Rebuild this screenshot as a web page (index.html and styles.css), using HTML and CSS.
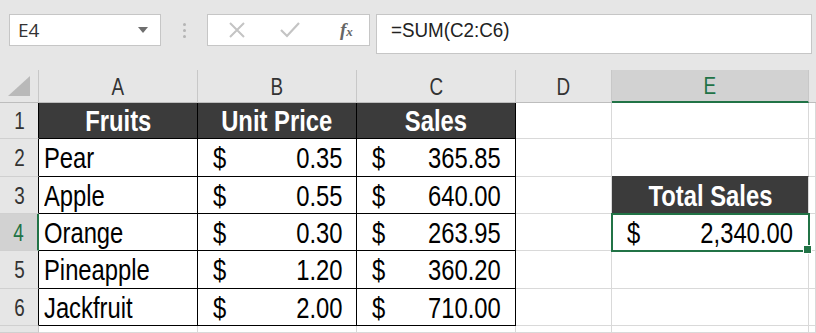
FILE: index.html
```html
<!DOCTYPE html>
<html lang="en">
<head>
    <meta charset="UTF-8">
    <meta name="viewport" content="width=device-width, initial-scale=1.0">
    <title>Sales sheet</title>
    <link rel="stylesheet" href="styles.css">
</head>
<body>
    <div class="formula-bar">
        <div class="name-box">
            <span>E4</span>
            <svg class="caret" width="10" height="6" viewBox="0 0 10 6"><path d="M0 0 L10 0 L5 6 Z" fill="#6e6e6e"/></svg>
        </div>
        <div class="grip"><i></i><i></i><i></i></div>
        <div class="fx-buttons">
            <svg width="18" height="18" viewBox="0 0 18 18"><path d="M2 2 L16 16 M16 2 L2 16" stroke="#c4c4c4" stroke-width="2" fill="none"/></svg>
            <svg width="22" height="18" viewBox="0 0 22 18"><path d="M2 9 L8 15 L20 2" stroke="#c4c4c4" stroke-width="2.2" fill="none"/></svg>
            <span class="fx">f<sub>x</sub></span>
        </div>
        <div class="formula"><span class="nw-soft">=SUM(C2:C6)</span></div>
    </div>

    <div class="sheet">
        <!-- column headers -->
        <div class="corner"><svg width="22" height="20" viewBox="0 0 22 20"><path d="M22 0 L22 20 L0 20 Z" fill="#b9b9b9"/></svg></div>
        <div class="col-head"><span class="nw">A</span></div>
        <div class="col-head"><span class="nw">B</span></div>
        <div class="col-head"><span class="nw">C</span></div>
        <div class="col-head"><span class="nw">D</span></div>
        <div class="col-head active"><span class="nw">E</span></div>
        <div class="col-head blank"></div>

        <!-- row 1 -->
        <div class="row-head edge"><span class="nw">1</span></div>
        <div class="cell t dark"><span class="nw">Fruits</span></div>
        <div class="cell t dark"><span class="nw">Unit Price</span></div>
        <div class="cell t dark"><span class="nw">Sales</span></div>
        <div class="cell"></div>
        <div class="cell"></div>
        <div class="cell"></div>

        <!-- row 2 -->
        <div class="row-head edge"><span class="nw">2</span></div>
        <div class="cell t text"><span class="nw">Pear</span></div>
        <div class="cell t money"><span class="nw">$</span><span class="nw">0.35</span></div>
        <div class="cell t money"><span class="nw">$</span><span class="nw">365.85</span></div>
        <div class="cell"></div>
        <div class="cell above-dark"></div>
        <div class="cell"></div>

        <!-- row 3 -->
        <div class="row-head edge"><span class="nw">3</span></div>
        <div class="cell t text"><span class="nw">Apple</span></div>
        <div class="cell t money"><span class="nw">$</span><span class="nw">0.55</span></div>
        <div class="cell t money"><span class="nw">$</span><span class="nw">640.00</span></div>
        <div class="cell"></div>
        <div class="cell dark total"><span class="nw">Total Sales</span></div>
        <div class="cell"></div>

        <!-- row 4 -->
        <div class="row-head edge selected"><span class="nw">4</span></div>
        <div class="cell t text"><span class="nw">Orange</span></div>
        <div class="cell t money"><span class="nw">$</span><span class="nw">0.30</span></div>
        <div class="cell t money"><span class="nw">$</span><span class="nw">263.95</span></div>
        <div class="cell"></div>
        <div class="cell money current"><span class="nw">$</span><span class="nw">2,340.00</span></div>
        <div class="cell"></div>

        <!-- row 5 -->
        <div class="row-head edge"><span class="nw">5</span></div>
        <div class="cell t text"><span class="nw">Pineapple</span></div>
        <div class="cell t money"><span class="nw">$</span><span class="nw">1.20</span></div>
        <div class="cell t money"><span class="nw">$</span><span class="nw">360.20</span></div>
        <div class="cell"></div>
        <div class="cell"></div>
        <div class="cell"></div>

        <!-- row 6 -->
        <div class="row-head edge"><span class="nw">6</span></div>
        <div class="cell t text"><span class="nw">Jackfruit</span></div>
        <div class="cell t money"><span class="nw">$</span><span class="nw">2.00</span></div>
        <div class="cell t money"><span class="nw">$</span><span class="nw">710.00</span></div>
        <div class="cell"></div>
        <div class="cell"></div>
        <div class="cell"></div>

        <!-- row 7, only its top shows -->
        <div class="row-head"></div>
        <div class="cell"></div>
        <div class="cell"></div>
        <div class="cell"></div>
        <div class="cell"></div>
        <div class="cell"></div>
        <div class="cell"></div>
    </div>
</body>
</html>
```

FILE: styles.css
```css
body {
    margin: 0;
    height: 333px;
    overflow: hidden;
    background-color: #e6e6e6;
    font-family: 'Liberation Sans', Arial, sans-serif;
    color: #000;
}

/* Arial Narrow look: squeeze Liberation Sans */
.nw {
    display: inline-block;
    transform: scaleX(0.82);
}

.nw-soft {
    display: inline-block;
    transform: scaleX(0.94);
    transform-origin: left center;
}

/* formula bar */
.formula-bar {
    display: flex;
    align-items: flex-start;
    height: 70px;
    padding: 14px 4px 0 9px;
    box-sizing: border-box;
}

.name-box {
    width: 152px;
    height: 32px;
    box-sizing: border-box;
    background-color: #fff;
    border: 1px solid #c6c6c6;
    display: flex;
    align-items: center;
    justify-content: space-between;
    padding: 0 12px 0 8px;
    font-family: 'Open Sans', 'Liberation Sans', sans-serif;
    font-size: 19px;
    color: #333;
}

.grip {
    width: 46px;
    height: 32px;
    display: flex;
    flex-direction: column;
    align-items: center;
    justify-content: center;
    gap: 3px;
}

.grip i {
    width: 3px;
    height: 3px;
    background-color: #b5b5b5;
    border-radius: 50%;
}

.fx-buttons {
    width: 163px;
    height: 32px;
    box-sizing: border-box;
    background-color: #fff;
    border: 1px solid #c6c6c6;
    display: flex;
    align-items: center;
    gap: 33px;
    padding-left: 20px;
}

.fx {
    font-family: 'Liberation Serif', serif;
    font-style: italic;
    font-weight: bold;
    font-size: 19px;
    color: #666;
    margin-left: 6px;
}

.fx sub {
    font-size: 13px;
    vertical-align: 0;
}

.formula {
    flex: 1;
    height: 40px;
    margin-left: 6px;
    box-sizing: border-box;
    background-color: #fff;
    border: 1px solid #c6c6c6;
    padding: 4px 0 0 14px;
    font-size: 20px;
    color: #222;
}

/* sheet grid */
.sheet {
    display: grid;
    grid-template-columns: 39px 159px 159px 159px 96px 197px 1fr;
    grid-template-rows: 33px 36px 38px 37px 37px 38px 37px 7px;
    background-color: #fff;
}

.corner,
.col-head,
.row-head {
    background-color: #e6e6e6;
    box-sizing: border-box;
}

.corner {
    display: flex;
    align-items: flex-end;
    justify-content: center;
    padding-bottom: 6px;
    border-right: 1px solid #c8c8c8;
    border-bottom: 1px solid #bdbdbd;
}

.col-head {
    display: flex;
    align-items: center;
    justify-content: center;
    font-size: 23px;
    color: #333;
    border-right: 1px solid #c8c8c8;
    border-bottom: 1px solid #bdbdbd;
    padding-top: 2px;
}

.col-head.active {
    background-color: #d2d2d2;
    color: #217346;
    border-bottom: 2px solid #217346;
}

.col-head.blank {
    border-right: none;
}

.row-head {
    display: flex;
    align-items: center;
    justify-content: center;
    font-size: 23px;
    color: #333;
    border-right: 1px solid #c8c8c8;
    border-bottom: 1px solid #d0d0d0;
    padding-top: 2px;
}

.row-head.edge {
    border-right-color: #000;
}

.row-head.selected {
    background-color: #d2d2d2;
    color: #217346;
    border-right: 2px solid #217346;
}

.cell {
    box-sizing: border-box;
    border-right: 1px solid #d9d9d9;
    border-bottom: 1px solid #d9d9d9;
    font-size: 29px;
    display: flex;
    align-items: center;
    white-space: nowrap;
}

.cell.t {
    border-right-color: #000;
    border-bottom-color: #000;
}

.cell.dark {
    background-color: #3b3b3b;
    color: #fff;
    font-weight: bold;
    justify-content: center;
    padding-top: 2px;
}

.cell.total {
    border-right-color: #d9d9d9;
    border-bottom-color: #3b3b3b;
}

.cell.above-dark {
    border-bottom-color: #3b3b3b;
}

.cell.text {
    padding: 2px 0 0 5px;
}

.cell.text .nw {
    transform-origin: left center;
}

.cell.money {
    justify-content: space-between;
    padding: 2px 14px 0 15px;
}

.cell.money .nw:first-child {
    transform-origin: left center;
}

.cell.money .nw:last-child {
    transform-origin: right center;
}

.cell.current {
    position: relative;
    outline: 2px solid #217346;
    outline-offset: -1px;
    padding-right: 15px;
}

.cell.current::after {
    content: '';
    position: absolute;
    right: -4px;
    bottom: -4px;
    width: 7px;
    height: 7px;
    background-color: #217346;
    border: 1px solid #fff;
}
```
